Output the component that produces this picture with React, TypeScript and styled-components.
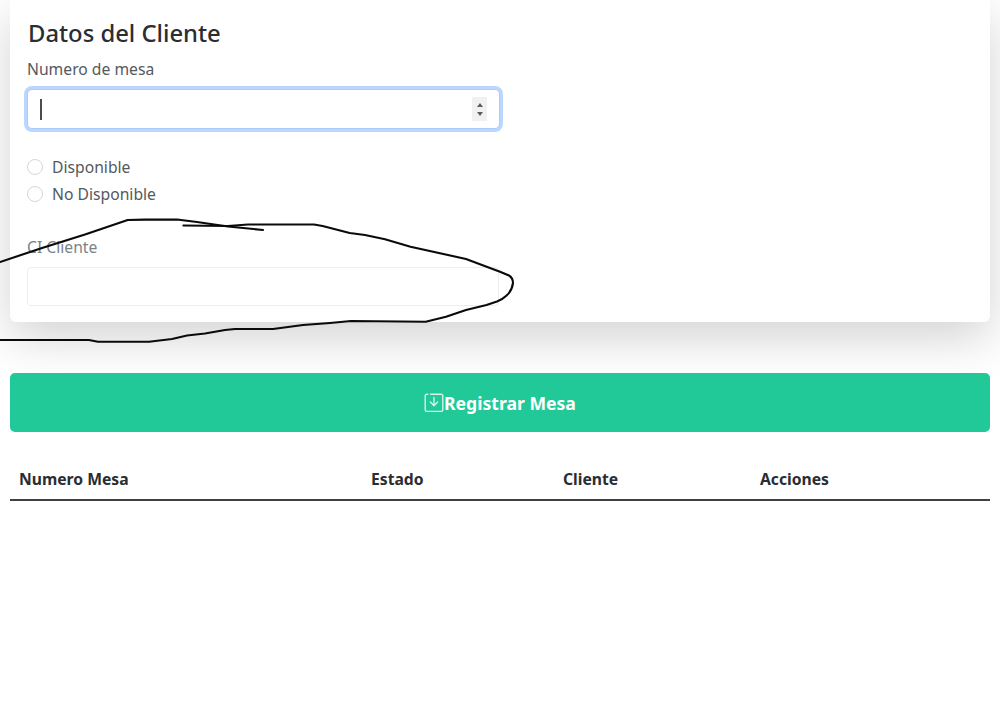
import React from "react";
import styled, { createGlobalStyle } from "styled-components";

const Global = createGlobalStyle`
  html, body { margin: 0; padding: 0; background: #fff; }
  body { font-family: "Noto Sans", "Open Sans", "Liberation Sans", sans-serif; color: #212529; }
  #root { height: 705px; overflow: hidden; }
`;

const Page = styled.main`
  position: relative;
  height: 705px;
  padding: 0 10px;
  box-sizing: border-box;
  overflow: hidden;
`;

const Card = styled.section`
  height: 322px;
  box-sizing: border-box;
  background: #fff;
  border-radius: 0 0 6px 6px;
  padding: 17px 17px 0 17px;
  box-shadow: 0 16px 48px rgba(0, 0, 0, 0.175);
`;

const Title = styled.h2`
  margin: 0 0 0 1px;
  font-size: 23.8px;
  line-height: 32px;
  font-weight: 500;
  color: #2a2e33;
`;

const FieldLabel = styled.label<{ $muted?: boolean }>`
  display: block;
  margin-top: 10px;
  font-size: 15.7px;
  line-height: 20px;
  color: ${(p) => (p.$muted ? "#7b8389" : "#55595e")};
`;

const FocusField = styled.div`
  display: flex;
  align-items: center;
  width: 473px;
  height: 40px;
  margin-top: 10px;
  box-sizing: border-box;
  border: 1px solid #a9cbfe;
  border-radius: 5px;
  box-shadow: 0 0 0 3px #bcd7fe;
  padding: 0 12px;
  background: #fff;
`;

const Caret = styled.span`
  display: block;
  width: 2px;
  height: 21px;
  background: #4a4d50;
`;

const BareInput = styled.input`
  flex: 1;
  min-width: 0;
  border: 0;
  outline: 0;
  background: transparent;
  font: inherit;
`;

const Spinner = styled.span`
  display: flex;
  flex-direction: column;
  align-items: center;
  justify-content: center;
  gap: 5px;
  width: 15px;
  height: 24px;
  background: #f1f1f1;
`;

const Arrow = styled.span<{ $down?: boolean }>`
  width: 0;
  height: 0;
  border-left: 3.5px solid transparent;
  border-right: 3.5px solid transparent;
  ${(p) =>
    p.$down ? "border-top: 4px solid #5c5c5c;" : "border-bottom: 4px solid #5c5c5c;"}
`;

const RadioGroup = styled.div`
  display: flex;
  flex-direction: column;
  gap: 7px;
  margin-top: 28px;
`;

const RadioRow = styled.label`
  display: flex;
  align-items: center;
  gap: 9px;
  height: 20px;
  font-size: 15.7px;
  color: #55595e;
`;

const RadioDot = styled.span`
  width: 16px;
  height: 16px;
  box-sizing: border-box;
  border: 1px solid #d4d6d8;
  border-radius: 50%;
  background: #fff;
`;

const PlainInput = styled.input`
  display: block;
  width: 472px;
  height: 39px;
  margin-top: 10px;
  box-sizing: border-box;
  border: 1px solid #ebedee;
  border-radius: 4px;
  background: #fff;
  outline: 0;
`;

const CiLabel = styled(FieldLabel)`
  margin-top: 33px;
`;

const SubmitButton = styled.button`
  display: flex;
  align-items: center;
  justify-content: center;
  width: 100%;
  height: 59px;
  margin-top: 51px;
  border: 0;
  border-radius: 5px;
  background: #20c997;
  color: #fff;
  font-family: inherit;
  font-size: 17.6px;
  font-weight: 700;
`;

const Table = styled.table`
  width: 100%;
  margin-top: 27px;
  border-collapse: collapse;
  table-layout: fixed;
`;

const Col = styled.col<{ $w: number }>`
  width: ${(p) => p.$w}px;
`;

const HeadCell = styled.th`
  padding: 9px;
  height: 22px;
  text-align: left;
  font-size: 15.7px;
  line-height: 22px;
  font-weight: 700;
  color: #2a2e33;
  border-bottom: 2px solid #3f4245;
`;

const Scribble = styled.svg`
  position: absolute;
  left: 0;
  top: 0;
  pointer-events: none;
`;

const SaveIcon = () => (
  <svg width="20" height="20" viewBox="0 0 20 20" fill="none" stroke="#d2f3e8" strokeWidth="1.4" strokeLinecap="round" strokeLinejoin="round">
    <path d="M6.5 1.2H17.2a1.6 1.6 0 0 1 1.6 1.6V16.8a1.6 1.6 0 0 1-1.6 1.6H2.8a1.6 1.6 0 0 1-1.6-1.6V2.8A1.6 1.6 0 0 1 2.8 1.2H3.8" />
    <path d="M10 4.5V12.5M6.4 9L10 12.7L13.6 9" />
  </svg>
);

export default function App() {
  return (
    <Page>
      <Global />
      <Card>
        <Title>Datos del Cliente</Title>
        <FieldLabel>Numero de mesa</FieldLabel>
        <FocusField>
          <Caret />
          <BareInput readOnly aria-label="Numero de mesa" />
          <Spinner>
            <Arrow />
            <Arrow $down />
          </Spinner>
        </FocusField>
        <RadioGroup>
          <RadioRow>
            <RadioDot />
            Disponible
          </RadioRow>
          <RadioRow>
            <RadioDot />
            No Disponible
          </RadioRow>
        </RadioGroup>
        <CiLabel $muted>CI Cliente</CiLabel>
        <PlainInput aria-label="CI Cliente" />
      </Card>
      <SubmitButton>
        <SaveIcon />
        Registrar Mesa
      </SubmitButton>
      <Table>
        <colgroup>
          <Col $w={352} />
          <Col $w={192} />
          <Col $w={197} />
          <Col $w={239} />
        </colgroup>
        <thead>
          <tr>
            <HeadCell>Numero Mesa</HeadCell>
            <HeadCell>Estado</HeadCell>
            <HeadCell>Cliente</HeadCell>
            <HeadCell>Acciones</HeadCell>
          </tr>
        </thead>
      </Table>
      <Scribble width="1000" height="705" viewBox="0 0 1000 705" fill="none" stroke="#0a0a0a" strokeWidth="2.1" strokeLinecap="round" strokeLinejoin="round">
        <path d="M0 262 L42 248 L85 234.5 L127.7 220 L145 219.6 L177 219.5 L197 222 L228 226.5 L263 230" />
        <path d="M183.4 225.5 L228 226 L248 224.5 L314 224.5 L322.6 226 L349.7 233 L365 235 L385 239.3 L410.5 246.7 L466 259 L500 271.7 L509 275.5 Q513 278 513 283 Q512 291 506 296 Q503 299 497 301.5 L486.5 305 L466 310 L446 316.7 L425.7 321.7 L351 321 L330 323 L303 325 L273 329 L235 329 L225 330 L205 333.5 L187 335.5 L172 339 L149 341.7 L98 341.7 L89 340 L0 340" />
      </Scribble>
    </Page>
  );
}
